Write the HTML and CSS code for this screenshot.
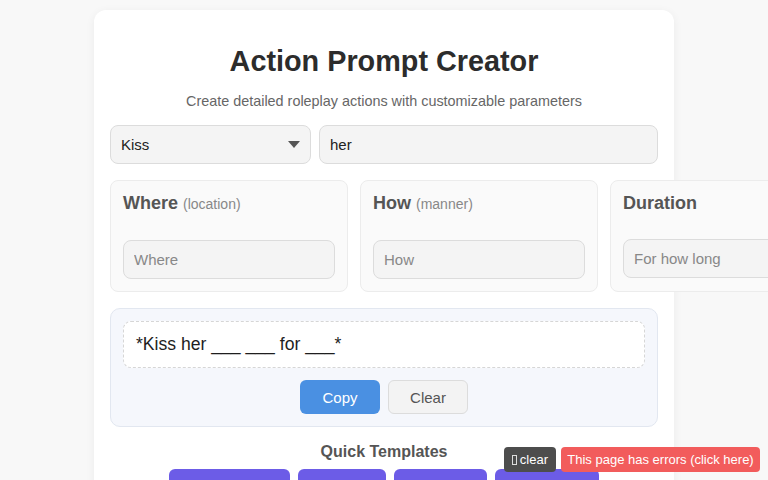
FILE: index.html
```html
<!DOCTYPE html>
<html lang="en">
<head>
<meta charset="utf-8">
<title>Action Prompt Creator</title>
<link rel="stylesheet" href="styles.css">
</head>
<body>
<main class="card">
  <h1 class="title">Action Prompt Creator</h1>
  <p class="subtitle">Create detailed roleplay actions with customizable parameters</p>

  <div class="top-row">
    <div class="select-wrap">
      <select class="field select">
        <option>Kiss</option>
      </select>
    </div>
    <input class="field target" type="text" value="her">
  </div>

  <div class="params">
    <div class="param">
      <div class="param-label">Where <span class="hint">(location)</span></div>
      <input class="field param-input" type="text" placeholder="Where">
    </div>
    <div class="param">
      <div class="param-label">How <span class="hint">(manner)</span></div>
      <input class="field param-input" type="text" placeholder="How">
    </div>
    <div class="param">
      <div class="param-label">Duration</div>
      <input class="field param-input" type="text" placeholder="For how long">
    </div>
  </div>

  <section class="output">
    <div class="output-text">*Kiss her ___ ___ for ___*</div>
    <div class="actions">
      <button class="btn btn-copy">Copy</button>
      <button class="btn btn-clear">Clear</button>
    </div>
  </section>

  <h2 class="templates-title">Quick Templates</h2>
  <div class="templates">
    <button class="tpl tpl-1">Passionate Kiss</button>
    <button class="tpl tpl-2">Warm Hug</button>
    <button class="tpl tpl-3">Hold Hand</button>
    <button class="tpl tpl-4">Gentle Touch</button>
  </div>
</main>

<div class="error-bar">
  <button class="err-clear"><span class="tofu"></span> clear</button>
  <button class="err-msg">This page has errors (click here)</button>
</div>
</body>
</html>
```

FILE: styles.css
```css
* { box-sizing: border-box; }

html, body {
  margin: 0;
  padding: 0;
  height: 100%;
  overflow: hidden;
}

body {
  background: #f8f8f8;
  font-family: "Liberation Sans", Arial, sans-serif;
  color: #333;
  padding-top: 10px;
}

.card {
  width: 580px;
  margin: 0 auto;
  background: #fff;
  border-radius: 12px;
  box-shadow: 0 2px 10px rgba(0, 0, 0, 0.06);
  padding: 33px 16px 16px;
  min-height: 600px;
}

.title {
  margin: 0;
  font-size: 28.8px;
  line-height: 36px;
  font-weight: bold;
  text-align: center;
  color: #2c2c2c;
}

.subtitle {
  margin: 12px 0 14px;
  font-size: 14.4px;
  line-height: 20px;
  text-align: center;
  color: #666;
}

.top-row {
  display: flex;
  gap: 8px;
}

.field {
  font-family: "Liberation Sans", Arial, sans-serif;
  font-size: 15px;
  height: 39px;
  border: 1px solid #dcdcdc;
  border-radius: 8px;
  background: #f4f4f4;
  color: #222;
  padding: 0 10px;
  outline: none;
}

.field::placeholder { color: #888; }

.select-wrap {
  position: relative;
  flex: 0 0 201px;
}

.select-wrap::after {
  content: "";
  position: absolute;
  right: 11px;
  top: 16px;
  border-left: 6px solid transparent;
  border-right: 6px solid transparent;
  border-top: 7px solid #555;
  pointer-events: none;
}

.select {
  width: 100%;
  appearance: none;
  -webkit-appearance: none;
}

.target { flex: 1; }

.params {
  display: flex;
  gap: 12px;
  margin-top: 16px;
}

.param {
  flex: 0 0 238px;
  background: #fafafa;
  border: 1px solid #ececec;
  border-radius: 8px;
  padding: 12px;
}

.param-label {
  font-size: 18px;
  line-height: 20px;
  font-weight: bold;
  color: #555;
  margin-bottom: 26px;
}

.hint {
  font-size: 14px;
  font-weight: normal;
  color: #888;
}

.param-input {
  width: 100%;
  display: block;
}

.output {
  margin-top: 16px;
  background: #f5f7fc;
  border: 1px solid #e2e7f0;
  border-radius: 10px;
  padding: 12px;
}

.output-text {
  background: #fff;
  border: 1px dashed #d6d6d6;
  border-radius: 8px;
  height: 47px;
  padding: 0 12px;
  display: flex;
  align-items: center;
  font-size: 17.6px;
  color: #1e1e1e;
}

.actions {
  display: flex;
  justify-content: center;
  gap: 8px;
  margin-top: 12px;
}

.btn {
  width: 80px;
  height: 34px;
  border-radius: 6px;
  font-family: "Liberation Sans", Arial, sans-serif;
  font-size: 15px;
  cursor: pointer;
}

.btn-copy {
  background: #4a90e2;
  border: none;
  color: #fff;
}

.btn-clear {
  background: #f3f3f3;
  border: 1px solid #dcdcdc;
  color: #555;
}

.templates-title {
  margin: 15px 0 7px;
  font-size: 16px;
  line-height: 20px;
  font-weight: bold;
  text-align: center;
  color: #555;
}

.templates {
  display: flex;
  justify-content: center;
  gap: 8px;
}

.tpl {
  height: 44px;
  border: none;
  border-radius: 6px;
  background: #6c5ce7;
  color: #fff;
  font-family: "Liberation Sans", Arial, sans-serif;
  font-size: 14px;
  line-height: 16px;
  padding: 14px 0 14px;
  display: flex;
  align-items: flex-start;
  justify-content: center;
}

.tpl-1 { width: 121px; }
.tpl-2 { width: 88px; }
.tpl-3 { width: 93px; }
.tpl-4 { width: 104px; }

.error-bar {
  position: fixed;
  right: 8px;
  bottom: 8px;
  display: flex;
  gap: 5px;
}

.err-clear,
.err-msg {
  height: 25px;
  border: none;
  border-radius: 4px;
  font-family: "Liberation Sans", Arial, sans-serif;
  font-size: 13px;
  color: #fff;
  padding: 0 8px;
  display: flex;
  align-items: center;
  white-space: nowrap;
}

.err-clear {
  background: #4d4d4d;
  width: 52px;
  justify-content: center;
  gap: 3px;
}

.tofu {
  display: inline-block;
  width: 5px;
  height: 10px;
  border: 1px solid #ddd;
}

.err-msg {
  background: #f25c5c;
  width: 199px;
  justify-content: center;
  padding: 0;
}
```
